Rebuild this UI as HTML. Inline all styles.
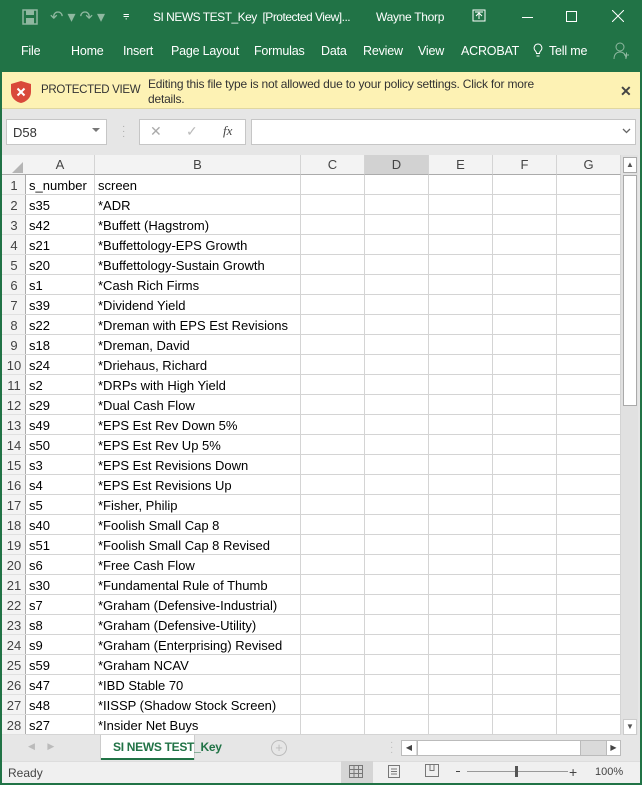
<!DOCTYPE html>
<html><head><style>
*{margin:0;padding:0;box-sizing:border-box}
body{width:642px;height:785px;overflow:hidden;font-family:"Liberation Sans",sans-serif;background:#e6e6e6;position:relative}
.a{position:absolute}
.t{color:#fff;font-size:12.5px;white-space:nowrap;letter-spacing:-0.2px}
.g{font-size:13px;color:#000;white-space:nowrap}
</style></head><body>
<div class="a" style="left:0;top:0;width:642px;height:72px;background:#217346"></div>
<svg class="a" style="left:22px;top:9px" width="16" height="16"><rect x="1" y="1" width="14" height="14" fill="none" stroke="#8fb8a0" stroke-width="1.5"/><rect x="4" y="1" width="8" height="5" fill="#8fb8a0"/><rect x="4" y="9" width="8" height="6" fill="#8fb8a0"/></svg>
<div class="a t" style="left:50px;top:7px;font-size:16px;color:#8fb8a0">↶ ▾ ↷ ▾</div>
<div class="a t" style="left:123px;top:9px;font-size:11px">⩦</div>
<div class="a t" style="left:153px;top:10px;font-size:12px;letter-spacing:-0.5px">SI NEWS TEST_Key&nbsp; [Protected View]...</div>
<div class="a t" style="left:376px;top:10px;font-size:12px;letter-spacing:-0.3px">Wayne Thorp</div>
<svg class="a" style="left:472px;top:9px" width="14" height="14"><rect x="1" y="1" width="12" height="11" fill="none" stroke="#fff"/><path d="M7 10V4M4 7l3-3 3 3M3 3h8" stroke="#fff" fill="none"/></svg>
<div class="a" style="left:522px;top:17px;width:11px;height:1px;background:#fff"></div>
<div class="a" style="left:566px;top:11px;width:11px;height:11px;border:1px solid #fff"></div>
<svg class="a" style="left:612px;top:10px" width="12" height="12"><path d="M0 0L12 12M12 0L0 12" stroke="#fff"/></svg>
<div class="a t" style="left:21px;top:44px">File</div>
<div class="a t" style="left:71px;top:44px">Home</div>
<div class="a t" style="left:123px;top:44px">Insert</div>
<div class="a t" style="left:171px;top:44px">Page Layout</div>
<div class="a t" style="left:254px;top:44px">Formulas</div>
<div class="a t" style="left:321px;top:44px">Data</div>
<div class="a t" style="left:363px;top:44px">Review</div>
<div class="a t" style="left:418px;top:44px">View</div>
<div class="a t" style="left:461px;top:44px">ACROBAT</div>
<svg class="a" style="left:533px;top:43px" width="10" height="15"><path d="M5 1a4 4 0 0 0-2.5 7c.7.7 1 1.5 1 2.5h3c0-1 .3-1.8 1-2.5A4 4 0 0 0 5 1zM3.5 13h3" fill="none" stroke="#fff"/></svg>
<div class="a t" style="left:549px;top:44px">Tell me</div>
<svg class="a" style="left:613px;top:41px" width="16" height="20"><circle cx="7" cy="6" r="4" fill="none" stroke="#8fb8a0"/><path d="M1 18c0-5 3-7 6-7s6 2 6 7M11 14h5M13.5 11.5v5" fill="none" stroke="#8fb8a0"/></svg>
<div class="a" style="left:2px;top:72px;width:638px;height:37px;background:#fdf2b4;border-bottom:1px solid #e0d7a0"></div>
<svg class="a" style="left:10px;top:80px" width="22" height="24"><path d="M11 1L21 4v8c0 6-5 10-10 11C6 22 1 18 1 12V4z" fill="#d9493a"/><path d="M7.5 8.5l7 7M14.5 8.5l-7 7" stroke="#fff" stroke-width="2"/></svg>
<div class="a" style="left:41px;top:84px;font-size:11.5px;color:#333;letter-spacing:-0.3px">PROTECTED VIEW</div>
<div class="a" style="left:148px;top:77px;font-size:12px;color:#333;line-height:15px;letter-spacing:-0.2px">Editing this file type is not allowed due to your policy settings. Click for more<br>details.</div>
<div class="a" style="left:620px;top:83px;font-size:14px;color:#444;font-weight:bold">✕</div>
<div class="a" style="left:6px;top:119px;width:101px;height:26px;background:#fff;border:1px solid #c6c6c6"></div>
<div class="a g" style="left:13px;top:125px;color:#333">D58</div>
<div class="a" style="left:92px;top:128px;width:0;height:0;border-left:4px solid transparent;border-right:4px solid transparent;border-top:4px solid #777"></div>
<div class="a" style="left:122px;top:124px;color:#aaa;font-size:10px;line-height:5px">·<br>·<br>·</div>
<div class="a" style="left:139px;top:119px;width:107px;height:26px;background:#fff;border:1px solid #c6c6c6"></div>
<div class="a" style="left:150px;top:123px;color:#aaa;font-size:14px">✕</div>
<div class="a" style="left:186px;top:123px;color:#bbb;font-size:14px">✓</div>
<div class="a" style="left:223px;top:123px;color:#444;font-size:13px;font-style:italic;font-family:'Liberation Serif',serif">fx</div>
<div class="a" style="left:251px;top:119px;width:385px;height:26px;background:#fff;border:1px solid #c6c6c6"></div>
<svg class="a" style="left:622px;top:128px" width="9" height="6"><path d="M1 1l3.5 3.5L8 1" fill="none" stroke="#666" stroke-width="1.3"/></svg>
<div class="a" style="left:2px;top:155px;width:619px;height:580px;background:#fff"></div>
<div id="grid"></div>
<div class="a" style="left:621px;top:155px;width:17px;height:580px;background:#e1e1e1"></div>
<div class="a" style="left:623px;top:157px;width:14px;height:16px;background:#fff;border:1px solid #aaa;font-size:8px;color:#555;text-align:center;line-height:14px">▲</div>
<div class="a" style="left:623px;top:175px;width:14px;height:231px;background:#fff;border:1px solid #aaa"></div>
<div class="a" style="left:623px;top:719px;width:14px;height:16px;background:#fff;border:1px solid #ccc;font-size:8px;color:#555;text-align:center;line-height:14px">▼</div>
<div class="a" style="left:2px;top:735px;width:638px;height:26px;background:#e6e6e6"></div>
<div class="a" style="left:28px;top:741px;color:#bbb;font-size:9px">◀&nbsp;&nbsp;&nbsp;&nbsp;&nbsp;▶</div>
<div class="a" style="left:101px;top:735px;width:93px;height:25px;background:#fff;border-bottom:2px solid #217346;box-shadow:1px 0 0 #ccc,-1px 0 0 #ccc"></div>
<div class="a" style="left:113px;top:740px;font-size:12px;font-weight:bold;color:#217346;letter-spacing:-0.3px">SI NEWS TEST_Key</div>
<div class="a" style="left:271px;top:740px;width:16px;height:16px;border:1px solid #bbb;border-radius:50%;color:#bbb;font-size:13px;text-align:center;line-height:14px">+</div>
<div class="a" style="left:390px;top:740px;color:#bbb;font-size:10px;line-height:5px">·<br>·<br>·</div>
<div class="a" style="left:401px;top:740px;width:220px;height:16px;background:#dadada;border:1px solid #bbb"></div>
<div class="a" style="left:402px;top:741px;width:14px;height:14px;background:#fff;font-size:8px;color:#444;text-align:center;line-height:14px">◀</div>
<div class="a" style="left:417px;top:741px;width:164px;height:14px;background:#fff;border-left:1px solid #bbb;border-right:1px solid #bbb"></div>
<div class="a" style="left:606px;top:741px;width:14px;height:14px;background:#fff;font-size:8px;color:#444;text-align:center;line-height:14px;border-left:1px solid #bbb">▶</div>
<div class="a" style="left:2px;top:761px;width:638px;height:22px;background:#f0f0f0;border-top:1px solid #ddd"></div>
<div class="a" style="left:8px;top:766px;font-size:12px;color:#444">Ready</div>
<div class="a" style="left:341px;top:761px;width:32px;height:22px;background:#d5d5d5"></div>
<svg class="a" style="left:349px;top:765px" width="14" height="13"><path d="M0.5 .5h13v12H.5zM5 .5v12M9.5 .5v12M.5 4.5h13M.5 8.5h13" fill="none" stroke="#777"/></svg>
<svg class="a" style="left:388px;top:765px" width="12" height="13"><path d="M.5 .5h11v12H.5zM3 4h6M3 6.5h6M3 9h6" fill="none" stroke="#777"/></svg>
<svg class="a" style="left:425px;top:764px" width="14" height="13"><path d="M.5 .5h13v12H.5zM5 .5v6h4V.5" fill="none" stroke="#777"/></svg>
<div class="a" style="left:456px;top:771px;width:4px;height:1px;background:#444"></div>
<div class="a" style="left:467px;top:771px;width:101px;height:1px;background:#999"></div>
<div class="a" style="left:515px;top:766px;width:3px;height:11px;background:#555"></div>
<div class="a" style="left:569px;top:764px;font-size:14px;color:#444">+</div>
<div class="a" style="left:595px;top:766px;font-size:11px;color:#444">100%</div>
<div class="a" style="left:0;top:72px;width:2px;height:713px;background:#217346"></div>
<div class="a" style="left:640px;top:72px;width:2px;height:713px;background:#217346"></div>
<div class="a" style="left:0;top:783px;width:642px;height:2px;background:#217346"></div>
<script>
var cols=[[26,95,'A'],[95,301,'B'],[301,365,'C'],[365,429,'D'],[429,493,'E'],[493,557,'F'],[557,621,'G']];
var data=[["s_number","screen"],["s35","*ADR"],["s42","*Buffett (Hagstrom)"],["s21","*Buffettology-EPS Growth"],["s20","*Buffettology-Sustain Growth"],["s1","*Cash Rich Firms"],["s39","*Dividend Yield"],["s22","*Dreman with EPS Est Revisions"],["s18","*Dreman, David"],["s24","*Driehaus, Richard"],["s2","*DRPs with High Yield"],["s29","*Dual Cash Flow"],["s49","*EPS Est Rev Down 5%"],["s50","*EPS Est Rev Up 5%"],["s3","*EPS Est Revisions Down"],["s4","*EPS Est Revisions Up"],["s5","*Fisher, Philip"],["s40","*Foolish Small Cap 8"],["s51","*Foolish Small Cap 8 Revised"],["s6","*Free Cash Flow"],["s30","*Fundamental Rule of Thumb"],["s7","*Graham (Defensive-Industrial)"],["s8","*Graham (Defensive-Utility)"],["s9","*Graham (Enterprising) Revised"],["s59","*Graham NCAV"],["s47","*IBD Stable 70"],["s48","*IISSP (Shadow Stock Screen)"],["s27","*Insider Net Buys"]];
var h='';
h+='<div class="a" style="left:2px;top:155px;width:619px;height:20px;background:#f3f3f3;border-bottom:1px solid #ababab"></div>';
h+='<div class="a" style="left:2px;top:175px;width:24px;height:560px;background:#f3f3f3;border-right:1px solid #ababab"></div>';
h+='<svg class="a" style="left:12px;top:162px" width="11" height="11"><path d="M11 0V11H0z" fill="#b5b5b5"/></svg>';
cols.forEach(function(c){
 var bg=c[2]=='D'?'background:#d2d2d2;':'';
 h+='<div class="a" style="left:'+c[0]+'px;top:155px;width:'+(c[1]-c[0])+'px;height:20px;'+bg+'border-right:1px solid #d4d4d4;border-bottom:1px solid #ababab;text-align:center;font-size:13px;line-height:19px;color:#444">'+c[2]+'</div>';
 h+='<div class="a" style="left:'+(c[1]-1)+'px;top:175px;width:1px;height:560px;background:#d4d4d4"></div>';
});
for(var i=0;i<28;i++){
 var y=175+i*20;
 h+='<div class="a" style="left:2px;top:'+y+'px;width:24px;height:20px;text-align:center;font-size:13px;line-height:21px;color:#444">'+(i+1)+'</div>';
 h+='<div class="a" style="left:26px;top:'+(y+19)+'px;width:595px;height:1px;background:#d4d4d4"></div>';
 h+='<div class="a" style="left:2px;top:'+(y+19)+'px;width:24px;height:1px;background:#e0e0e0"></div>';
 h+='<div class="a g" style="left:29px;top:'+(y+3)+'px">'+data[i][0]+'</div>';
 h+='<div class="a g" style="left:98px;top:'+(y+3)+'px">'+data[i][1]+'</div>';
}
document.getElementById('grid').innerHTML=h;
</script>
</body></html>
